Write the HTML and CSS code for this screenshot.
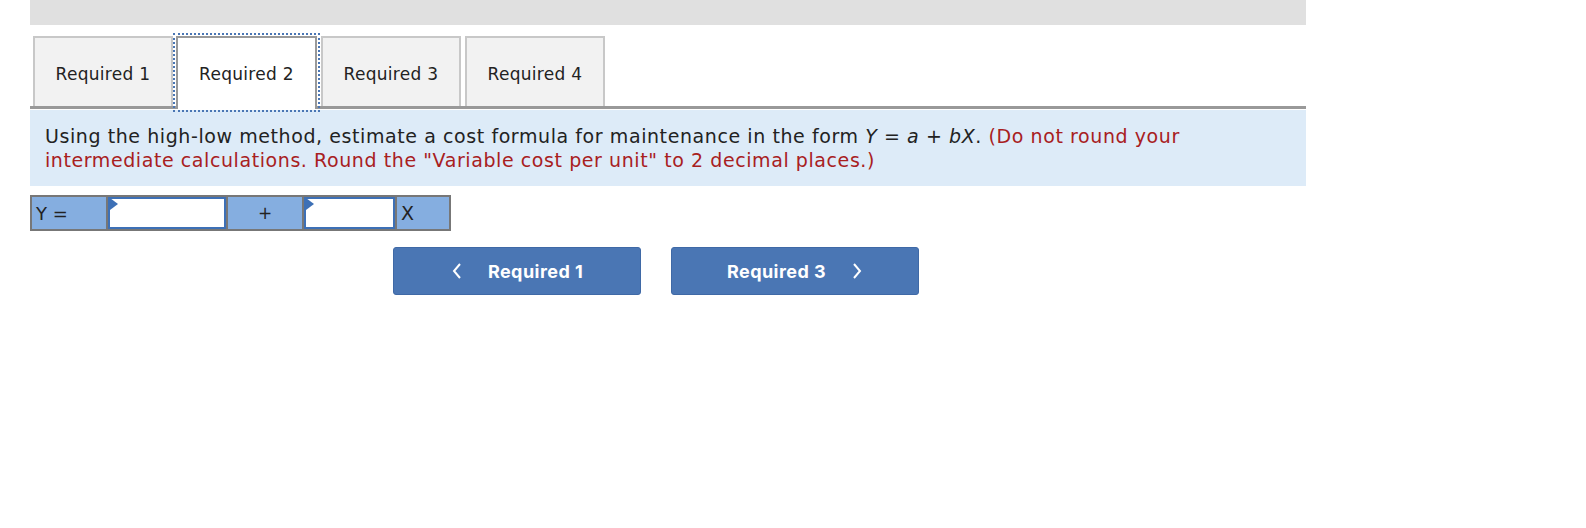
FILE: index.html
```html
<!DOCTYPE html>
<html>
<head>
    <title>Required 2</title>
    <link rel="stylesheet" href="styles.css">
</head>
<body>

    <div class="page">
        <div class="topbar"></div>

        <!-- Requirement tabs -->
        <div class="tabs">
            <div class="tab tab-1">Required 1</div>
            <div class="tab tab-2 active">Required 2</div>
            <div class="tab tab-3">Required 3</div>
            <div class="tab tab-4">Required 4</div>
        </div>

        <div class="prompt">
            Using the high-low method, estimate a cost formula for maintenance in the form <i>Y</i> = <i>a</i> + <i>bX</i>.
            <span class="note">(Do not round your intermediate calculations. Round the "Variable cost per unit" to 2 decimal places.)</span>
        </div>

        <!-- Cost formula row -->
        <div class="formula">
            <div class="cell label">Y =</div>
            <div class="cell entry wide"><span class="flag"></span></div>
            <div class="cell sign">+</div>
            <div class="cell entry narrow"><span class="flag"></span></div>
            <div class="cell label x">X</div>
        </div>

        <div class="nav">
            <div class="nav-btn prev">
                <svg width="12" height="18" viewBox="0 0 12 18"><polyline points="9,2 3,9 9,16" fill="none" stroke="#fff" stroke-width="2"/></svg>
                <span>Required 1</span>
            </div>
            <div class="nav-btn next">
                <span>Required 3</span>
                <svg width="12" height="18" viewBox="0 0 12 18"><polyline points="3,2 9,9 3,16" fill="none" stroke="#fff" stroke-width="2"/></svg>
            </div>
        </div>
    </div>

</body>
</html>
```

FILE: styles.css
```css
/* Page frame */
body {
    margin: 0;
    padding: 0;
    font-family: "DejaVu Sans", Verdana, sans-serif;
    color: #222;
    background: #fff;
}

.page {
    width: 1276px;
    margin-left: 30px;
}

.topbar {
    height: 25px;
    background: #e0e0e0;
}

/* Tabs */
.tabs {
    display: flex;
    align-items: flex-end;
    margin-top: 11px;
    padding-left: 3px;
    border-bottom: 3px solid #999;
}

.tab {
    height: 70px;
    box-sizing: border-box;
    padding-top: 3px;
    display: flex;
    align-items: center;
    justify-content: center;
    background: #f2f2f2;
    border: 2px solid #c8c8c8;
    border-bottom: none;
    font-size: 17px;
    letter-spacing: 0.3px;
    color: #222;
}

.tab-1 { width: 140px; }
.tab-2 { width: 141px; margin-left: 3px; }
.tab-3 { width: 140px; margin-left: 4px; }
.tab-4 { width: 140px; margin-left: 4px; }

.tab.active {
    position: relative;
    background: #fff;
    border-color: #999;
    outline: 2px dotted #4a76b4;
    outline-offset: 1px;
    margin-bottom: -3px;
    height: 73px;
    padding-top: 0;
}

/* Question text */
.prompt {
    background: #ddebf8;
    margin-top: 1px;
    padding: 14px 15px 14px 15px;
    font-size: 19px;
    line-height: 24px;
    letter-spacing: 0.58px;
}

.prompt i {
    font-style: italic;
}

.prompt .note {
    color: #a8201e;
}

/* Formula row */
.formula {
    display: flex;
    width: 417px;
    height: 32px;
    margin-top: 9px;
    border: 2px solid #777;
    background: #777;
    gap: 2px;
}

.cell {
    height: 32px;
    box-sizing: border-box;
    background: #85aee0;
    font-size: 17px;
    display: flex;
    align-items: center;
    color: #222;
}

.cell.label {
    width: 74px;
    padding-left: 4px;
    font-size: 18px;
}

.cell.x {
    width: 52px;
    padding-left: 4px;
    font-size: 19px;
}

.cell.sign {
    width: 74px;
    justify-content: center;
}

.cell.entry {
    position: relative;
    background: #fff;
    border: 2px solid #3d70b6;
}

.cell.wide { width: 118px; }
.cell.narrow { width: 91px; }

.flag {
    position: absolute;
    top: -1px;
    left: 0;
    width: 0;
    height: 0;
    border-top: 6px solid transparent;
    border-bottom: 6px solid transparent;
    border-left: 8px solid #3d70b6;
}

/* Previous / next buttons */
.nav {
    display: flex;
    gap: 30px;
    margin-top: 16px;
    margin-left: 363px;
}

.nav-btn {
    width: 246px;
    height: 46px;
    box-sizing: content-box;
    background: #4a76b4;
    border: 1px solid #3f69a6;
    border-radius: 3px;
    color: #fff;
    font-family: Inter, "Liberation Sans", sans-serif;
    font-weight: 700;
    font-size: 18px;
    letter-spacing: 0.45px;
    display: flex;
    align-items: center;
    justify-content: center;
    gap: 25px;
}

.nav-btn svg {
    display: block;
}
```
